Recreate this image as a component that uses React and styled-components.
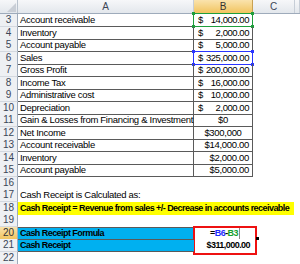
import React from "react";
import styled, { createGlobalStyle, css } from "styled-components";

const Global = createGlobalStyle`
  html, body {
    margin: 0;
    padding: 0;
    background: #ffffff;
  }
  body {
    font-family: "Liberation Sans", Arial, sans-serif;
    font-size: 9.5px;
    color: #000;
    overflow: hidden;
  }
`;

const COLS = "18px 176px 59px 42px 1fr";
const LINE = "#5a5a5a";

const rows = [
  { n: 3, a: "Account receivable", b: { kind: "acct", v: "14,000.00" }, ref: "green" },
  { n: 4, a: "Inventory", b: { kind: "acct", v: "2,000.00" } },
  { n: 5, a: "Account payable", b: { kind: "acct", v: "5,000.00" } },
  { n: 6, a: "Sales", b: { kind: "acct", v: "325,000.00" }, ref: "blue" },
  { n: 7, a: "Gross Profit", b: { kind: "acct", v: "200,000.00" } },
  { n: 8, a: "Income Tax", b: { kind: "acct", v: "16,000.00" } },
  { n: 9, a: "Administrative cost", b: { kind: "acct", v: "10,000.00" } },
  { n: 10, a: "Depreciation", b: { kind: "acct", v: "2,000.00" } },
  { n: 11, a: "Gain & Losses from Financing & Investment", b: { kind: "center", v: "$0" } },
  { n: 12, a: "Net Income", b: { kind: "center", v: "$300,000" } },
  { n: 13, a: "Account receivable", b: { kind: "right", v: "$14,000.00" } },
  { n: 14, a: "Inventory", b: { kind: "right", v: "$2,000.00" } },
  { n: 15, a: "Account payable", b: { kind: "right", v: "$5,000.00" } },
];

export default function App() {
  return (
    <>
      <Global />
      <Sheet>
        <HeadRow>
          <Corner>
            <svg width="10" height="10" viewBox="0 0 10 10">
              <polygon points="10,1 10,10 1,10" fill="#c9ced6" />
            </svg>
          </Corner>
          <ColHead>A</ColHead>
          <ColHead $active>B</ColHead>
          <ColHead>C</ColHead>
          <ColHead />
        </HeadRow>

        {rows.map((r) => (
          <Row key={r.n}>
            <RowNum>{r.n}</RowNum>
            <Cell $boxed>{r.a}</Cell>
            <Cell $boxed $align={r.b.kind}>
              {r.b.kind === "acct" ? (
                <>
                  <span>$</span>
                  <span>{r.b.v}</span>
                </>
              ) : (
                r.b.v
              )}
              {r.ref && (
                <RefBox $color={r.ref === "green" ? "#1e9e3c" : "#2a35ff"}>
                  <Dot $pos="tl" />
                  <Dot $pos="tr" />
                  <Dot $pos="bl" />
                  <Dot $pos="br" />
                </RefBox>
              )}
            </Cell>
            <Cell />
            <Cell />
          </Row>
        ))}

        <Row>
          <RowNum>16</RowNum>
          <Cell />
          <Cell />
          <Cell />
          <Cell />
        </Row>
        <Row>
          <RowNum>17</RowNum>
          <Cell>Cash Receipt is Calculated as:</Cell>
          <Cell />
          <Cell />
          <Cell />
        </Row>
        <Row>
          <RowNum>18</RowNum>
          <Wide $fill="#ffff00" $bold>
            Cash Receipt = Revenue from sales +/- Decrease in accounts receivable
          </Wide>
          <Cell />
        </Row>
        <Row>
          <RowNum>19</RowNum>
          <Cell />
          <Cell />
          <Cell />
          <Cell />
        </Row>
        <Row>
          <RowNum $active>20</RowNum>
          <Cell $fill="#00b0f0" $bold $edge>Cash Receipt Formula</Cell>
          <Cell $bold $align="formula">
            <Ref $color="#000">=</Ref>
            <Ref $color="#1f2dff">B6</Ref>
            <Ref $color="#000">-</Ref>
            <Ref $color="#16a02e">B3</Ref>
            <Caret />
            <RedBox>
              <Handle />
            </RedBox>
          </Cell>
          <Cell />
          <Cell />
        </Row>
        <Row>
          <RowNum>21</RowNum>
          <Cell $fill="#00b0f0" $bold $edge>Cash Receipt</Cell>
          <Cell $bold $align="right">$311,000.00</Cell>
          <Cell />
          <Cell />
        </Row>
        <Row>
          <RowNum>22</RowNum>
          <Cell />
          <Cell />
          <Cell />
          <Cell />
        </Row>
      </Sheet>
    </>
  );
}

const Sheet = styled.div`
  width: 300px;
  height: 264px;
  overflow: hidden;
  display: flex;
  flex-direction: column;
`;

const HeadRow = styled.div`
  display: grid;
  grid-template-columns: ${COLS};
  height: 14px;
  flex: none;
  border-bottom: 1px solid #9eabbb;
  box-sizing: border-box;
`;

const headBg = css`
  background: linear-gradient(#f6f7f9, #e3e7ec);
`;

const Corner = styled.div`
  ${headBg};
  border-right: 1px solid #b9c2cd;
  display: flex;
  align-items: flex-end;
  justify-content: flex-end;
  padding: 0 1px 1px 0;
`;

const ColHead = styled.div`
  ${headBg};
  border-right: 1px solid #c7ced7;
  color: #3b4657;
  font-size: 10px;
  line-height: 13px;
  text-align: center;
  ${(p) =>
    p.$active &&
    css`
      background: linear-gradient(#fae3ad, #f1c45f);
      border-right-color: #c9a152;
      color: #333;
    `}
`;

const Row = styled.div`
  display: grid;
  grid-template-columns: ${COLS};
  height: 12.5px;
  flex: none;
`;

const RowNum = styled.div`
  background: #eef0f3;
  border-right: 1px solid #9eabbb;
  border-bottom: 1px solid #d3d8df;
  box-sizing: border-box;
  color: #3b4657;
  font-size: 10px;
  line-height: 12px;
  text-align: center;
  ${(p) =>
    p.$active &&
    css`
      background: linear-gradient(#fae3ad, #f1c45f);
      color: #333;
    `}
`;

const Cell = styled.div`
  position: relative;
  box-sizing: border-box;
  padding: 0 2px;
  line-height: 12px;
  white-space: nowrap;
  overflow: visible;
  letter-spacing: -0.3px;
  background: ${(p) => p.$fill || "transparent"};
  ${(p) =>
    p.$bold &&
    css`
      font-weight: 700;
      font-size: 9px;
      letter-spacing: -0.55px;
    `}
  ${(p) =>
    p.$boxed &&
    css`
      border-right: 1px solid ${LINE};
      border-bottom: 1px solid ${LINE};
    `}
  ${(p) =>
    p.$edge &&
    css`
      border-bottom: 1px solid ${LINE};
      border-top: 1px solid ${LINE};
      line-height: 10px;
    `}
  ${(p) =>
    p.$align === "acct" &&
    css`
      display: flex;
      justify-content: space-between;
      padding: 0 3px 0 4px;
      letter-spacing: -0.45px;
    `}
  ${(p) =>
    p.$align === "center" &&
    css`
      text-align: center;
    `}
  ${(p) =>
    p.$align === "right" &&
    css`
      text-align: right;
      padding-right: 3px;
    `}
  ${(p) =>
    p.$align === "formula" &&
    css`
      display: flex;
      justify-content: flex-end;
      padding-right: 15px;
    `}
`;

const Wide = styled(Cell)`
  grid-column: span 3;
  margin-right: 1px;
  line-height: 13px;
`;

const Ref = styled.span`
  color: ${(p) => p.$color};
`;

const Caret = styled.span`
  position: absolute;
  right: 13px;
  top: 1px;
  bottom: 1px;
  width: 1px;
  background: #8a8a8a;
`;

const RefBox = styled.div`
  position: absolute;
  left: -1px;
  top: -1px;
  right: -1px;
  bottom: -1px;
  border: 1px solid ${(p) => p.$color};
  color: ${(p) => p.$color};
  pointer-events: none;
`;

const dotPos = {
  tl: "left: -2px; top: -2px;",
  tr: "right: -2px; top: -2px;",
  bl: "left: -2px; bottom: -2px;",
  br: "right: -2px; bottom: -2px;",
};

const Dot = styled.span`
  position: absolute;
  width: 3px;
  height: 3px;
  background: currentColor;
  ${(p) => dotPos[p.$pos]};
`;

const RedBox = styled.div`
  position: absolute;
  left: -1px;
  top: -1px;
  width: calc(100% + 1px);
  height: 25px;
  border: 2px solid #ee1111;
  pointer-events: none;
`;

const Handle = styled.span`
  position: absolute;
  right: -4px;
  top: 9px;
  width: 3px;
  height: 3px;
  background: #000;
`;
